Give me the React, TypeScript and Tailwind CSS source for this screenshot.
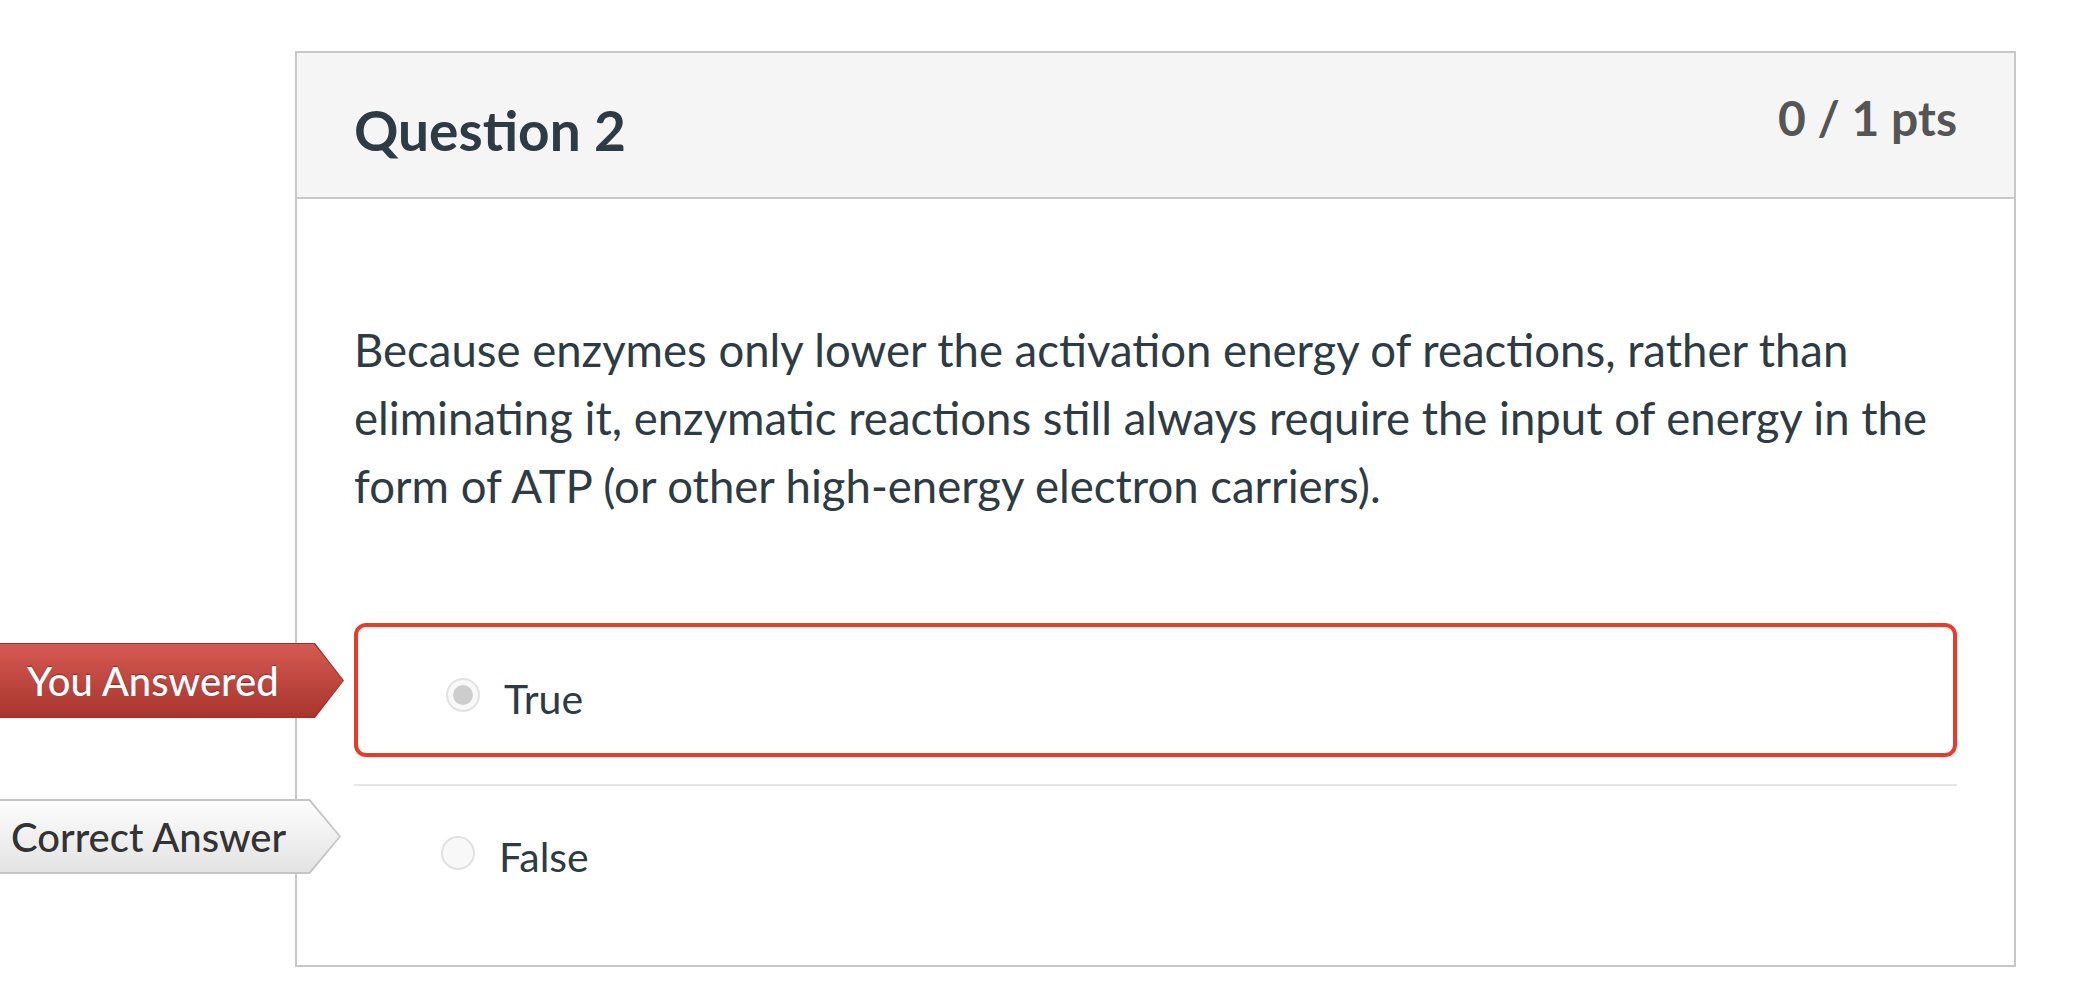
import React from "react";

const answers = [
  { label: "True", chosen: true },
  { label: "False", chosen: false },
];

function Radio({ checked }: { checked: boolean }) {
  return (
    <span className="flex h-[34px] w-[34px] shrink-0 items-center justify-center rounded-full border-2 border-[#e2e2e2] bg-[#f8f8f8]">
      {checked && <span className="h-[20px] w-[20px] rounded-full bg-[#cdcdcd]" />}
    </span>
  );
}

export default function App() {
  return (
    <div className="relative h-[985px] w-full overflow-hidden bg-white font-['Lato','Noto_Sans',sans-serif] text-[#2d3b45]">
      {/* question card */}
      <div className="ml-[295px] mt-[51px] h-[916px] w-[1721px] border-2 border-[#c8c8c8]">
        <div className="flex h-[146px] items-start justify-between border-b-2 border-[#c8c8c8] bg-[#f5f5f5] px-[57px]">
          <h3 className="pt-[44px] text-[55px] font-bold leading-[1.2]">Question 2</h3>
          <div className="pt-[36px] text-[48px] font-bold leading-[1.2] text-[#555555]">0 / 1 pts</div>
        </div>

        <div className="px-[57px] pt-[117px]">
          <p className="text-[45.5px] leading-[68px]">
            Because enzymes only lower the activation energy of reactions, rather than eliminating it, enzymatic
            reactions still always require the input of energy in the form of ATP (or other high-energy electron
            carriers).
          </p>

          <div className="mt-[103px]">
            {answers.map((a, i) => (
              <div key={a.label}>
                {i > 0 && <div className="mt-[27px] h-[2px] bg-[#e6e6e6]" />}
                <div
                  className={
                    a.chosen
                      ? "flex h-[134px] items-center gap-[24px] rounded-[12px] border-4 border-[#ea3a2c] pl-[88px] pt-[10px]"
                      : "flex h-[134px] items-center gap-[24px] rounded-[12px] border-4 border-transparent pl-[83px]"
                  }
                >
                  <Radio checked={a.chosen} />
                  <span className="pt-[6px] text-[41px] leading-none">{a.label}</span>
                </div>
              </div>
            ))}
          </div>
        </div>
      </div>

      {/* answer arrows */}
      <div className="absolute left-0 top-[643px] h-[75px] w-[344px] bg-[#9c2f28] [clip-path:polygon(0_0,calc(100%-29px)_0,100%_50%,calc(100%-29px)_100%,0_100%)]">
        <div className="absolute inset-x-0 top-[1px] bottom-[1px] right-[1px] flex items-center bg-gradient-to-b from-[#d65a52] to-[#a7352e] pl-[27px] text-[40px] font-medium text-white [clip-path:polygon(0_0,calc(100%-29px)_0,100%_50%,calc(100%-29px)_100%,0_100%)] [text-shadow:0_-1px_1px_rgba(0,0,0,0.35)]">
          You Answered
        </div>
      </div>
      <div className="absolute left-0 top-[799px] h-[75px] w-[341px] bg-[#c4c4c4] [clip-path:polygon(0_0,calc(100%-31px)_0,100%_50%,calc(100%-31px)_100%,0_100%)]">
        <div className="absolute inset-x-0 top-[2px] bottom-[2px] right-[2px] flex items-center bg-gradient-to-b from-[#fdfdfd] to-[#e3e3e3] pl-[11px] text-[40px] font-medium text-[#333333] [clip-path:polygon(0_0,calc(100%-30px)_0,100%_50%,calc(100%-30px)_100%,0_100%)]">
          Correct Answer
        </div>
      </div>
    </div>
  );
}
